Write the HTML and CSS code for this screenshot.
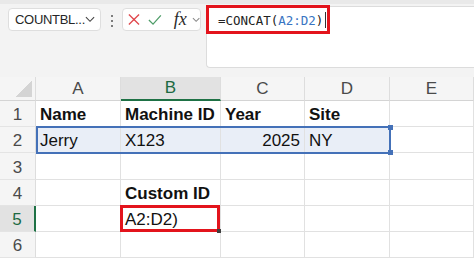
FILE: index.html
```html
<!DOCTYPE html>
<html lang="en">

<head>
    <meta charset="UTF-8">
    <title>CONCAT range</title>
    <link rel="stylesheet" href="styles.css">
</head>

<body>
    <div class="top-strip"></div>
    <div class="toolbar">
        <div class="namebox">
            <span class="namebox-text">COUNTBL...</span>
            <svg class="chevron" width="11" height="7" viewBox="0 0 11 7">
                <polyline points="1,1 5.5,5.5 10,1" fill="none" stroke="#444" stroke-width="1.2" />
            </svg>
        </div>
        <div class="dots">
            <span></span><span></span><span></span>
        </div>
        <div class="fxbox">
            <svg width="13" height="13" viewBox="0 0 13 13">
                <line x1="1" y1="1" x2="12" y2="12" stroke="#e0454a" stroke-width="1.4" />
                <line x1="12" y1="1" x2="1" y2="12" stroke="#e0454a" stroke-width="1.4" />
            </svg>
            <svg width="15" height="12" viewBox="0 0 15 12">
                <polyline points="1,6 5.5,10.5 14,1" fill="none" stroke="#4f9d69" stroke-width="1.4" />
            </svg>
            <span class="fx">fx</span>
            <svg class="chevron-small" width="9" height="6" viewBox="0 0 9 6">
                <polyline points="1,1 4.5,4.5 8,1" fill="none" stroke="#888" stroke-width="1.1" />
            </svg>
        </div>
        <div class="formula">
            <span class="formula-text">=CONCAT(<span class="ref">A2:D2</span>)<span class="caret"></span></span>
        </div>
    </div>

    <div class="sheet">
        <!-- column headers -->
        <div class="hd corner"><span class="corner-mark"></span></div>
        <div class="hd col">A</div>
        <div class="hd col current">B</div>
        <div class="hd col">C</div>
        <div class="hd col">D</div>
        <div class="hd col">E</div>

        <div class="hd row">1</div>
        <div class="cell bold">Name</div>
        <div class="cell bold">Machine ID</div>
        <div class="cell bold">Year</div>
        <div class="cell bold">Site</div>
        <div class="cell"></div>

        <div class="hd row">2</div>
        <div class="cell picked">Jerry</div>
        <div class="cell picked">X123</div>
        <div class="cell picked num">2025</div>
        <div class="cell picked">NY</div>
        <div class="cell"></div>

        <div class="hd row">3</div>
        <div class="cell"></div>
        <div class="cell"></div>
        <div class="cell"></div>
        <div class="cell"></div>
        <div class="cell"></div>

        <div class="hd row">4</div>
        <div class="cell"></div>
        <div class="cell bold">Custom ID</div>
        <div class="cell"></div>
        <div class="cell"></div>
        <div class="cell"></div>

        <div class="hd row current">5</div>
        <div class="cell"></div>
        <div class="cell active">A2:D2)<span class="fill-handle"></span></div>
        <div class="cell"></div>
        <div class="cell"></div>
        <div class="cell"></div>

        <div class="hd row">6</div>
        <div class="cell"></div>
        <div class="cell"></div>
        <div class="cell"></div>
        <div class="cell"></div>
        <div class="cell"></div>

        <!-- reference highlight for A2:D2 -->
        <div class="range">
            <span class="tick tl"></span>
            <span class="tick bl"></span>
            <span class="knob tr"></span>
            <span class="knob br"></span>
        </div>
    </div>
</body>

</html>
```

FILE: styles.css
```css
body {
    margin: 0;
    width: 474px;
    height: 258px;
    overflow: hidden;
    background-color: #ffffff;
    font-family: "Liberation Sans", Arial, sans-serif;
    color: #1a1a1a;
}

.top-strip {
    height: 4px;
    background-color: #e9e9e9;
}

/* name box, fx buttons and formula bar */
.toolbar {
    display: flex;
    align-items: flex-start;
    height: 73px;
    padding-left: 8px;
    background-color: #f3f3f3;
    box-sizing: border-box;
}

.namebox {
    display: flex;
    align-items: center;
    justify-content: space-between;
    width: 93px;
    height: 23px;
    margin-top: 4px;
    padding: 0 5px 0 6px;
    background-color: #ffffff;
    border: 1px solid #dedede;
    border-radius: 4px;
    box-sizing: border-box;
}

.namebox-text {
    font-size: 13px;
    letter-spacing: -0.3px;
    color: #262626;
}

.dots {
    display: flex;
    flex-direction: column;
    align-items: center;
    gap: 3px;
    width: 21px;
    margin-top: 11px;
}

.dots span {
    width: 2px;
    height: 2px;
    background-color: #555555;
    border-radius: 1px;
}

.fxbox {
    display: flex;
    align-items: center;
    width: 79px;
    height: 23px;
    margin-top: 4px;
    padding-left: 5px;
    gap: 8px;
    background-color: #ffffff;
    border: 1px solid #dedede;
    border-radius: 4px;
    box-sizing: border-box;
}

.fx {
    margin-left: 4px;
    font-family: "Liberation Serif", "Times New Roman", serif;
    font-style: italic;
    font-size: 18px;
    color: #2b2b2b;
}

.chevron-small {
    margin-left: -3px;
}

.formula {
    flex: 1;
    height: 62px;
    margin: 2px 0 0 5px;
    background-color: #ffffff;
    border: 1px solid #dcdcdc;
    border-right: none;
    border-radius: 4px 0 0 4px;
    box-sizing: border-box;
}

.formula-text {
    display: flex;
    align-items: center;
    width: 124px;
    height: 29px;
    margin: -2px 0 0 -1px;
    padding: 1px 0 0 9px;
    border: 3px solid #e3141c;
    box-sizing: border-box;
    font-family: "DejaVu Sans Mono", "Liberation Mono", monospace;
    font-size: 12.5px;
    color: #222222;
}

.ref {
    color: #3874c2;
}

.caret {
    width: 1px;
    height: 16px;
    margin-left: 2px;
    background-color: #333333;
}

/* worksheet */
.sheet {
    position: relative;
    display: grid;
    grid-template-columns: 36px 85px 100px 84px 85px 84px;
    grid-template-rows: 24px 26px 26px 27px 26px 26px 26px;
}

.hd {
    display: flex;
    align-items: center;
    justify-content: center;
    background-color: #f5f5f5;
    border-right: 1px solid #dddddd;
    border-bottom: 1px solid #d4d4d4;
    box-sizing: border-box;
    font-size: 17px;
    color: #4a4a4a;
}

.corner {
    align-items: flex-end;
    justify-content: flex-end;
    padding: 0 3px 3px 0;
}

.corner-mark {
    width: 17px;
    height: 16px;
    background: linear-gradient(to bottom right, transparent 50%, #d4d4d4 50%);
}

.hd.row {
    align-items: flex-end;
    padding-bottom: 1px;
    line-height: 20px;
    border-bottom-color: #e4e4e4;
}

.hd.current {
    background-color: #e2e2e2;
    color: #1d6a42;
}

.hd.col.current {
    border-bottom: 2px solid #1e7145;
}

.hd.row.current {
    border-right: 2px solid #1e7145;
}

.cell {
    display: flex;
    align-items: flex-end;
    padding: 0 4px 1px 4px;
    line-height: 20px;
    border-right: 1px solid #e1e1e1;
    border-bottom: 1px solid #e1e1e1;
    box-sizing: border-box;
    font-size: 17px;
    white-space: nowrap;
    color: #111111;
}

.cell.bold {
    font-weight: bold;
}

.cell.num {
    justify-content: flex-end;
}

.cell.picked {
    background-color: #e9eef7;
}

.cell.active {
    position: relative;
}

.cell.active::after {
    content: "";
    position: absolute;
    top: -1px;
    left: -1px;
    right: 0;
    bottom: -1px;
    border: 3px solid #e3141c;
}

.fill-handle {
    position: absolute;
    right: -1px;
    bottom: -2px;
    width: 4px;
    height: 4px;
    background-color: #3f3f3f;
    z-index: 1;
}

.range {
    position: absolute;
    top: 49px;
    left: 36px;
    width: 355px;
    height: 28px;
    border: 2px solid #4471b8;
    box-sizing: border-box;
}

.tick {
    position: absolute;
    left: -2px;
    width: 2px;
    height: 5px;
    background-color: #4471b8;
}

.tick.tl {
    top: -2px;
}

.tick.bl {
    bottom: -2px;
}

.knob {
    position: absolute;
    right: -4px;
    width: 5px;
    height: 5px;
    background-color: #4471b8;
}

.knob.tr {
    top: -3px;
}

.knob.br {
    bottom: -3px;
}
```
